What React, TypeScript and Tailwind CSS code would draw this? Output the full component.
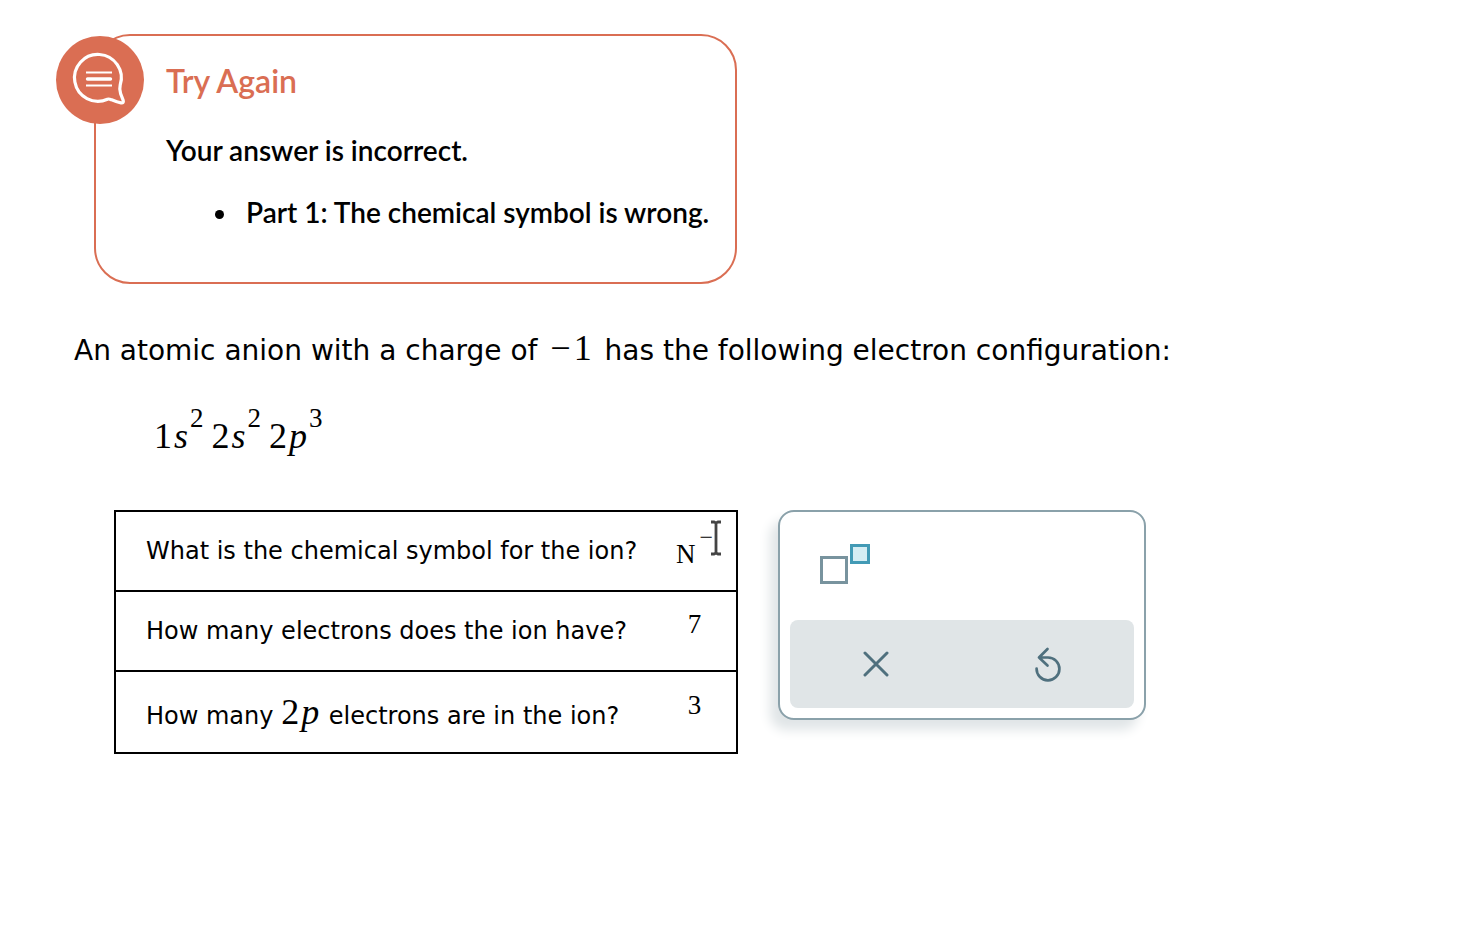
import React from "react";

function FeedbackIcon() {
  return (
    <svg viewBox="0 0 88 88" className="absolute -left-10 top-0 size-[88px]" aria-hidden="true">
      <circle cx="44" cy="44" r="44" fill="#da6e53" />
      <path
        d="M51.5 63.2 A23.4 23.4 0 1 1 64.2 49 C63.4 52.3 63.4 54.3 64.6 57.6 L67.2 64.4 Q68 67.4 65 66.9 C61 66.2 57.5 64.6 54.6 63.4 Q53 62.7 51.5 63.2 Z"
        fill="none"
        stroke="#fff"
        strokeWidth="3.2"
        strokeLinejoin="round"
      />
      <path d="M30 36.5h26M30 49.5h26" stroke="#fff" strokeWidth="2" />
      <path d="M31.5 43h23" stroke="#fff" strokeWidth="3.4" strokeLinecap="round" />
    </svg>
  );
}

function Feedback() {
  return (
    <section className="relative ml-[94px] w-[643px] rounded-[36px] border-2 border-[#da6e53] pt-[27px] pr-4 pb-[52px] pl-[70px] font-['Lato',sans-serif] font-semibold">
      <FeedbackIcon />
      <h1 className="text-[32px] leading-9 font-semibold text-[#da6e53]">Try Again</h1>
      <p className="mt-[33px] text-[28px] leading-9">Your answer is incorrect.</p>
      <ul className="mt-[26px] list-disc pl-[74px] text-[28px] leading-9">
        <li className="pl-1.5 whitespace-nowrap">Part 1: The chemical symbol is wrong.</li>
      </ul>
    </section>
  );
}

function Orbital({ shell, kind, count }: { shell: string; kind: string; count: string }) {
  return (
    <span className="flex items-start">
      <span>
        {shell}
        <i className="ml-0.5">{kind}</i>
      </span>
      <span className="-mt-4 ml-0.5 text-[27px] leading-9">{count}</span>
    </span>
  );
}

function AnswerTable() {
  const question = "pl-[30px] text-left font-normal whitespace-nowrap";
  const answer = "font-['Liberation_Serif',serif] pb-3 pl-3 text-center text-[27px]";
  return (
    <table className="w-[624px] border-collapse border-2 border-black text-2xl">
      <tbody>
        <tr className="h-20 border-b-2 border-black">
          <th scope="row" className={question}>What is the chemical symbol for the ion?</th>
          <td className="relative w-24 pt-2 pl-[35px] font-['Liberation_Serif',serif] text-[27px]">
            <span className="flex items-start">
              N<span className="-mt-4 ml-1 text-2xl">−</span>
            </span>
            <svg viewBox="0 0 12 36" className="absolute top-2 right-[14px] h-9 w-3" fill="none" aria-hidden="true">
              <path d="M1 2h3l2 1 2-1h3M6 2v32M1 34h3l2-1 2 1h3" stroke="#444" strokeWidth="2.8" />
            </svg>
          </td>
        </tr>
        <tr className="h-20 border-b-2 border-black">
          <th scope="row" className={question}>How many electrons does the ion have?</th>
          <td className={answer}>7</td>
        </tr>
        <tr className="h-[82px]">
          <th scope="row" className={question}>
            How many <span className="mr-0.5 font-['Liberation_Serif',serif] text-4xl">2<i className="ml-0.5">p</i></span> electrons are in the ion?
          </th>
          <td className={answer}>3</td>
        </tr>
      </tbody>
    </table>
  );
}

function Toolbox() {
  return (
    <aside className="h-[210px] w-[368px] rounded-2xl border-2 border-[#8aa1aa] bg-white px-2.5 pb-2.5 shadow-[-8px_10px_12px_0px_#e0e5e7]">
      <div className="flex h-[108px] items-start pt-8 pl-[30px]">
        <button type="button" aria-label="Superscript" className="block">
          <svg viewBox="0 0 50 40" className="h-10 w-[50px]" aria-hidden="true">
            <rect x="1.5" y="13.5" width="25" height="25" fill="#fff" stroke="#78939e" strokeWidth="3" />
            <rect x="31.5" y="1.5" width="17" height="17" fill="#d5edf3" stroke="#429ab5" strokeWidth="3" />
          </svg>
        </button>
      </div>
      <div className="grid h-[88px] grid-cols-2 rounded-lg bg-[#e0e5e7] text-[#4f707e]">
        <button type="button" aria-label="Clear" className="grid place-items-center">
          <svg viewBox="0 0 26 26" className="size-[26px]" fill="none" stroke="currentColor" strokeWidth="3" strokeLinecap="round" aria-hidden="true">
            <path d="M2 2l22 22M24 2L2 24" />
          </svg>
        </button>
        <button type="button" aria-label="Undo" className="grid place-items-center">
          <svg viewBox="0 0 28 36" className="h-9 w-7" fill="none" stroke="currentColor" strokeWidth="2.7" strokeLinecap="round" strokeLinejoin="round" aria-hidden="true">
            <path d="M13.5 3L5 11.5L13.5 19.5M5 11.5h9A11.4 11.4 0 1 1 2.6 22.6" />
          </svg>
        </button>
      </div>
    </aside>
  );
}

export default function App() {
  return (
    <main className="min-h-screen bg-white pt-[34px] font-['DejaVu_Sans',sans-serif] text-black">
      <Feedback />
      <p className="mt-11 pl-[74px] text-[28px] leading-[44px]">
        An atomic anion with a charge of <span className="mx-1 font-['Liberation_Serif',serif] text-4xl">−&#8202;1</span> has the following electron configuration:
      </p>
      <p className="mt-[43px] flex gap-2 pl-[154px] font-['Liberation_Serif',serif] text-4xl">
        <Orbital shell="1" kind="s" count="2" />
        <Orbital shell="2" kind="s" count="2" />
        <Orbital shell="2" kind="p" count="3" />
      </p>
      <div className="mt-[54px] flex flex-wrap items-start gap-10 pl-[114px]">
        <AnswerTable />
        <Toolbox />
      </div>
    </main>
  );
}
